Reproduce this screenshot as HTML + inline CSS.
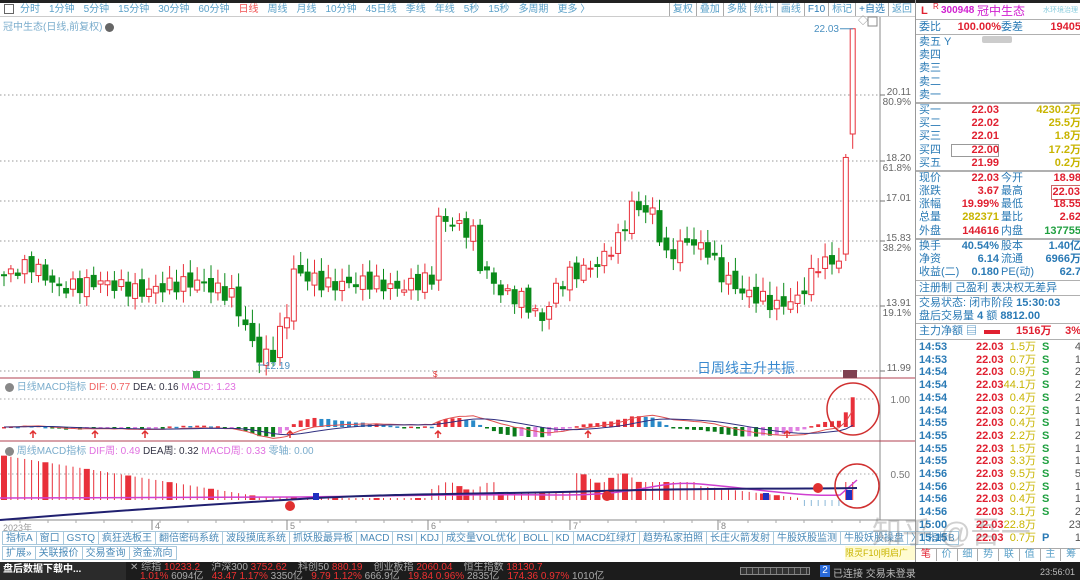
<!DOCTYPE html>
<html><head><meta charset="utf-8">
<style>
*{margin:0;padding:0;box-sizing:border-box}
body{width:1080px;height:580px;overflow:hidden;background:#fff;font-family:"Liberation Sans","Noto Sans CJK SC",sans-serif;font-size:11px;position:relative}
.a{position:absolute;white-space:nowrap}
.tb span{margin-right:9px;color:#5aa0c8}
.rp div.r{position:absolute;left:0;width:165px;height:13px;line-height:13px}
.l1{position:absolute;left:3px;color:#2a7ab5}
.v1{position:absolute;right:82px;color:#e02030;font-weight:bold}
.l2{position:absolute;left:85px;color:#2a7ab5}
.v2{position:absolute;right:0;color:#e02030;font-weight:bold}
.hl{position:absolute;left:0;width:165px;height:2px;background:#b0b0b0}
.bt{display:flex;position:absolute;left:2px;height:14px;line-height:13px;font-size:10px}
.bt span{border:1px solid #a8c8dc;border-left:none;padding:0 3px;color:#4a8ab8;background:#fff}
.bt span:first-child{border-left:1px solid #a8c8dc}
.rb span{border-left:1px solid #aaa;padding:0 3px;color:#5aa0c8}
</style></head><body>
<div class="a" style="left:0;top:0;width:1080px;height:3px;background:#222"></div>
<div class="a tb" style="left:0;top:3px;width:915px;height:14px;border-bottom:1px solid #ccc;line-height:13px;font-size:10px;padding-left:4px">
<span style="display:inline-block;width:10px;height:10px;border:1px solid #666;vertical-align:middle;margin-right:6px"></span><span>分时</span><span>1分钟</span><span>5分钟</span><span>15分钟</span><span>30分钟</span><span>60分钟</span><span style="color:#f05050">日线</span><span>周线</span><span>月线</span><span>10分钟</span><span>45日线</span><span>季线</span><span>年线</span><span>5秒</span><span>15秒</span><span>多周期</span><span>更多 〉</span></div>
<div class="a rb" style="right:165px;top:3px;display:flex;font-size:10px;line-height:13px;background:#fff">
<span>复权</span><span>叠加</span><span>多股</span><span>统计</span><span>画线</span><span style="color:#2a7ab5">F10</span><span>标记</span><span style="color:#2a7ab5">+自选</span><span>返回</span></div>
<div class="a" style="left:3px;top:18px;color:#7aaccc;font-size:10px">冠中生态(日线,前复权) <span style="display:inline-block;width:9px;height:9px;border-radius:50%;background:#666;vertical-align:middle"></span></div>

<svg class="a" style="left:0;top:0" width="915" height="530" id="sv"></svg>

<div class="a" style="left:697px;top:358px;color:#3a8ad0;font-size:14px">日周线主升共振</div>
<div class="a" style="left:5px;top:378px;font-size:10px"><span style="display:inline-block;width:9px;height:9px;border-radius:50%;background:#888;vertical-align:middle"></span> <span style="color:#7aaccc">日线MACD指标</span> <span style="color:#f06060">DIF: 0.77</span> <span style="color:#334">DEA: 0.16</span> <span style="color:#e070e0">MACD: 1.23</span></div>
<div class="a" style="left:5px;top:442px;font-size:10px"><span style="display:inline-block;width:9px;height:9px;border-radius:50%;background:#888;vertical-align:middle"></span> <span style="color:#7aaccc">周线MACD指标</span> <span style="color:#e070e0">DIF周: 0.49</span> <span style="color:#334">DEA周: 0.32</span> <span style="color:#e070e0">MACD周: 0.33</span> <span style="color:#7aaccc">零轴: 0.00</span></div>
<div class="a" style="left:3px;top:521px;font-size:9px;color:#999">2023年</div>

<div class="bt" style="top:531px"><span>指标A</span><span>窗口</span><span>GSTQ</span><span>疯狂选板王</span><span>翻倍密码系统</span><span>波段摸底系统</span><span>抓妖股最异板</span><span>MACD</span><span>RSI</span><span>KDJ</span><span>成交量VOL优化</span><span>BOLL</span><span>KD</span><span>MACD红绿灯</span><span>趋势私家拍照</span><span>长庄火箭发射</span><span>牛股妖股监测</span><span>牛股妖股操盘</span><span>〉</span><span>指标B</span></div>
<div class="bt" style="top:546px"><span>扩展»</span><span>关联报价</span><span>交易查询</span><span>资金流向</span></div>
<div class="a" style="left:845px;top:546px;width:70px;height:14px;background:#fffbd0;color:#c8b400;font-size:9px;line-height:14px">限灵F10|明启广</div>

<div class="a rp" style="left:915px;top:0;width:165px;height:562px;border-left:1px solid #999">
<div class="r" style="top:3px;height:16px;line-height:16px"><span style="position:absolute;left:5px;color:#e02030;font-weight:bold">L</span><span style="position:absolute;left:17px;top:-4px;font-size:8px;color:#e02030">R</span><span style="position:absolute;left:25px;color:#d020d0;font-weight:bold;font-size:10px">300948</span><span style="position:absolute;left:61px;color:#d020d0;font-size:12px">冠中生态</span><span style="position:absolute;left:127px;color:#8cd;font-size:7px">水环境治理</span></div>
<div class="hl" style="top:19px;height:1px"></div>
<div class="r" style="top:21px"><span class="l1">委比</span><span class="v1" style="right:80px">100.00%</span><span class="l2">委差</span><span class="v2">19405</span></div>
<div class="hl" style="top:34px;height:1px"></div>
<div class="a" style="left:66px;top:36px;width:30px;height:7px;background:#ccc;border-radius:2px"></div>
<div class="r" style="top:36px"><span class="l1">卖五 Y</span></div>
<div class="r" style="top:49px"><span class="l1">卖四</span></div>
<div class="r" style="top:62px"><span class="l1">卖三</span></div>
<div class="r" style="top:76px"><span class="l1">卖二</span></div>
<div class="r" style="top:89px"><span class="l1">卖一</span></div>
<div class="hl" style="top:102px"></div>
<div class="r" style="top:104px"><span class="l1">买一</span><span class="v1">22.03</span><span class="v2" style="color:#c8b400">4230.2万</span></div>
<div class="r" style="top:117px"><span class="l1">买二</span><span class="v1">22.02</span><span class="v2" style="color:#c8b400">25.5万</span></div>
<div class="r" style="top:130px"><span class="l1">买三</span><span class="v1">22.01</span><span class="v2" style="color:#c8b400">1.8万</span></div>
<div class="r" style="top:144px"><span class="l1">买四</span><span style="position:absolute;left:35px;width:48px;height:13px;border:1px solid #999"></span><span class="v1">22.00</span><span class="v2" style="color:#c8b400">17.2万</span></div>
<div class="r" style="top:157px"><span class="l1">买五</span><span class="v1">21.99</span><span class="v2" style="color:#c8b400">0.2万</span></div>
<div class="hl" style="top:170px"></div>
<div class="r" style="top:172px"><span class="l1">现价</span><span class="v1">22.03</span><span class="l2">今开</span><span class="v2">18.98</span></div>
<div class="r" style="top:185px"><span class="l1">涨跌</span><span class="v1">3.67</span><span class="l2">最高</span><span class="v2" style="border:1px solid #c66">22.03</span></div>
<div class="r" style="top:198px"><span class="l1">涨幅</span><span class="v1">19.99%</span><span class="l2">最低</span><span class="v2">18.55</span></div>
<div class="r" style="top:211px"><span class="l1">总量</span><span class="v1" style="color:#c8b400">282371</span><span class="l2">量比</span><span class="v2">2.62</span></div>
<div class="r" style="top:225px"><span class="l1">外盘</span><span class="v1">144616</span><span class="l2">内盘</span><span class="v2" style="color:#20a040">137755</span></div>
<div class="hl" style="top:238px"></div>
<div class="r" style="top:240px"><span class="l1">换手</span><span class="v1" style="color:#2a7ab5">40.54%</span><span class="l2">股本</span><span class="v2" style="color:#2a7ab5">1.40亿</span></div>
<div class="r" style="top:253px"><span class="l1">净资</span><span class="v1" style="color:#2a7ab5">6.14</span><span class="l2">流通</span><span class="v2" style="color:#2a7ab5">6966万</span></div>
<div class="r" style="top:266px"><span class="l1">收益(二)</span><span class="v1" style="color:#2a7ab5">0.180</span><span class="l2">PE(动)</span><span class="v2" style="color:#2a7ab5">62.7</span></div>
<div class="hl" style="top:280px;height:1px"></div>
<div class="r" style="top:282px"><span class="l1">注册制 己盈利 表决权无差异</span></div>
<div class="hl" style="top:295px;height:1px"></div>
<div class="r" style="top:297px"><span class="l1">交易状态: 闭市阶段 <b>15:30:03</b></span></div>
<div class="r" style="top:310px"><span class="l1">盘后交易量 <b>4</b> 额 <b>8812.00</b></span></div>
<div class="hl" style="top:323px;height:1px"></div>
<div class="r" style="top:325px"><span class="l1">主力净额 ▤</span><span style="position:absolute;left:68px;top:5px;width:16px;height:4px;background:#e02030"></span><span class="v1" style="right:8px;left:100px">1516万</span><span class="v2">3%</span></div>
<div class="hl" style="top:339px;height:1px"></div>
<div id="ticks"></div>
<div class="a" style="left:0;top:548px;width:165px;height:13px;display:flex;font-size:10px;line-height:12px;color:#5aa0c8;border-top:1px solid #aaa">
<span style="flex:1;text-align:center;color:#e02030;border-right:1px solid #aaa">笔</span><span style="flex:1;text-align:center;border-right:1px solid #aaa">价</span><span style="flex:1;text-align:center;border-right:1px solid #aaa">细</span><span style="flex:1;text-align:center;border-right:1px solid #aaa">势</span><span style="flex:1;text-align:center;border-right:1px solid #aaa">联</span><span style="flex:1;text-align:center;border-right:1px solid #aaa">值</span><span style="flex:1;text-align:center;border-right:1px solid #aaa">主</span><span style="flex:1;text-align:center">筹</span></div>
</div>
<div class="a" style="left:872px;top:508px;font-size:30px;color:rgba(120,120,120,.35)">知乎 @吾一</div>

<div class="a" style="left:0;top:562px;width:1080px;height:18px;background:#1c1c1c"></div>
<div class="a" style="left:0;top:562px;width:126px;height:18px;background:#2b2b2b;color:#fff;font-weight:bold;font-size:10px;line-height:16px;padding-left:3px">盘后数据下载中...</div>
<div class="a" style="left:130px;top:563px;font-size:10px;line-height:10px;color:#aaa">✕ 综指 <span style="color:#f03030">10233.2</span>&nbsp;&nbsp;&nbsp;&nbsp;沪深300 <span style="color:#f03030">3752.62</span>&nbsp;&nbsp;&nbsp;&nbsp;科创50 <span style="color:#f03030">880.19</span>&nbsp;&nbsp;&nbsp;&nbsp;创业板指 <span style="color:#f03030">2060.04</span>&nbsp;&nbsp;&nbsp;&nbsp;恒生指数 <span style="color:#f03030">18130.7</span></div>
<div class="a" style="left:140px;top:572px;font-size:10px;line-height:10px;color:#aaa"><span style="color:#f03030">1.01%</span> 6094亿&nbsp;&nbsp; <span style="color:#f03030">43.47 1.17%</span> 3350亿&nbsp;&nbsp; <span style="color:#f03030">9.79 1.12%</span> 666.9亿&nbsp;&nbsp; <span style="color:#f03030">19.84 0.96%</span> 2835亿&nbsp;&nbsp; <span style="color:#f03030">174.36 0.97%</span> 1010亿</div>
<div class="a" style="left:740px;top:567px;width:70px;height:8px;border:1px solid #888;background:repeating-linear-gradient(90deg,#333 0 5px,#777 5px 6px)"></div>
<div class="a" style="left:820px;top:565px;width:10px;height:12px;background:#2a6ad8;color:#fff;font-size:10px;text-align:center;line-height:12px">2</div>
<div class="a" style="left:833px;top:565px;color:#bbb;font-size:10px">已连接 交易未登录</div>
<div class="a" style="left:1040px;top:567px;color:#bbb;font-size:9px">23:56:01</div>

<script>
const sv=document.getElementById('sv');let s='';
function py(p){return 95+(20.11-p)*34.5;}
[95,161,201,241,306,371].forEach(y=>{s+=`<line x1="0" x2="880" y1="${y}" y2="${y}" stroke="#999" stroke-dasharray="1.5,2.5"/>`;});
s+=`<line x1="880" x2="880" y1="17" y2="520" stroke="#888"/>`;
s+=`<line x1="0" x2="915" y1="378" y2="378" stroke="#b04050"/><line x1="0" x2="915" y1="441" y2="441" stroke="#b04050"/><line x1="0" x2="915" y1="520" y2="520" stroke="#888"/>`;
[[399,'1.00'],[474,'0.50']].forEach(a=>{s+=`<line x1="0" x2="880" y1="${a[0]}" y2="${a[0]}" stroke="#aaa" stroke-dasharray="1.5,2.5"/><text x="910" y="${a[0]+4}" font-size="10" fill="#777" text-anchor="end">${a[1]}</text>`;});
[[95,'20.11','80.9%'],[161,'18.20','61.8%'],[201,'17.01',''],[241,'15.83','38.2%'],[306,'13.91','19.1%'],[371,'11.99','']].forEach(a=>{s+=`<line x1="880" x2="885" y1="${a[0]}" y2="${a[0]}" stroke="#777"/><text x="911" y="${a[0]}" font-size="10" fill="#666" text-anchor="end">${a[1]}</text><text x="911" y="${a[0]+10}" font-size="10" fill="#666" text-anchor="end">${a[2]}</text>`;});
[[152,'4'],[287,'5'],[428,'6'],[570,'7'],[718,'8']].forEach(a=>{s+=`<line x1="${a[0]}" x2="${a[0]}" y1="520" y2="530" stroke="#888"/><text x="${a[0]+3}" y="529" font-size="9" fill="#888">${a[1]}</text>`;});
for(let x=20;x<880;x+=28){s+=`<line x1="${x}" x2="${x}" y1="520" y2="523" stroke="#aaa"/>`;}
const kp=[[0,14.9],[4,15.2],[8,14.5],[14,14.7],[20,14.4],[24,14.6],[28,14.7],[33,14.3],[35,13.4],[37,12.5],[39,12.6],[41,13.8],[42,15.0],[47,14.6],[53,14.7],[57,14.5],[62,14.8],[63,16.5],[65,16.4],[68,16.1],[69,15.2],[72,14.4],[75,14.2],[78,13.6],[80,14.5],[82,14.9],[86,15.2],[89,15.9],[91,16.9],[94,16.7],[96,15.4],[99,15.9],[102,15.6],[104,14.9],[107,14.4],[110,14.2],[112,14.0],[115,14.2],[118,15.2],[120,15.3],[121,15.3]];
const N=124;const C=[];
function interp(i){for(let k=0;k<kp.length-1;k++){if(i>=kp[k][0]&&i<=kp[k+1][0]){const t=(i-kp[k][0])/(kp[k+1][0]-kp[k][0]);return kp[k][1]+t*(kp[k+1][1]-kp[k][1]);}}return 15.3;}
let prev=14.8;
for(let i=0;i<N;i++){let o,c,h,l;
 if(i==N-2){o=15.5;c=18.3;h=18.4;l=15.3;}
 else if(i==N-1){o=18.98;c=22.03;h=22.03;l=18.55;}
 else{c=interp(i)+Math.sin(i*2.7)*0.22;o=prev+Math.sin(i*1.9+1)*0.12;h=Math.max(o,c)+0.1+Math.abs(Math.sin(i*3.1))*0.3;l=Math.min(o,c)-0.08-Math.abs(Math.cos(i*2.3))*0.25;}
 C.push(c);prev=c;
 const x=4+i*6.9;const up=c>=o;const col=up?'#e8303a':'#0a8a1a';
 const yt=py(Math.max(o,c)),yb=py(Math.min(o,c));
 s+=`<line x1="${x}" x2="${x}" y1="${py(h)}" y2="${py(l)}" stroke="${col}"/>`;
 s+=`<rect x="${x-2.5}" y="${yt}" width="5" height="${Math.max(1,yb-yt)}" fill="${up?'#fff':col}" stroke="${col}" stroke-width="1"/>`;
}
s+=`<text x="839" y="${py(22.03)+3}" font-size="10" fill="#4a90c0" text-anchor="end">22.03</text><line x1="840" x2="853" y1="${py(22.03)}" y2="${py(22.03)}" stroke="#4a90c0"/>`;
s+=`<text x="265" y="369" font-size="10" fill="#4a90c0">12.19</text><line x1="258" x2="265" y1="365" y2="365" stroke="#4a90c0"/>`;
s+=`<rect x="193" y="371" width="7" height="7" fill="#2a9a3a"/><text x="433" y="377" font-size="8" fill="#e03030">$</text><rect x="843" y="370" width="14" height="8" fill="#804050"/>`;
s+=`<text x="858" y="24" font-size="10" fill="#888">◇</text><rect x="868" y="17" width="9" height="9" fill="none" stroke="#888"/>`;
function ema(a,n){const r=[];let e=a[0];a.forEach((v,i)=>{e=i?e+(v-e)*2/(n+1):v;r.push(e)});return r;}
const e12=ema(C,12),e26=ema(C,26);const dif=C.map((v,i)=>e12[i]-e26[i]);const dea=ema(dif,9);
const z=427,sc=22;let pd='',pe='';
for(let i=0;i<N;i++){const x=4+i*6.9;const m=2*(dif[i]-dea[i]);const pm=i?2*(dif[i-1]-dea[i-1]):m;
 let col=m>=0?(m>=pm?'#e8303a':'#2a8ac8'):(m<=pm?'#0a7a1a':'#e080e0');
 const y=z-m*sc;s+=`<rect x="${x-2}" y="${Math.min(y,z)}" width="4" height="${Math.max(1.5,Math.abs(y-z))}" fill="${col}"/>`;
 pd+=(i?'L':'M')+x+','+(z-dif[i]*sc);pe+=(i?'L':'M')+x+','+(z-dea[i]*sc);}
s+=`<path d="${pd}" fill="none" stroke="#e05050"/><path d="${pe}" fill="none" stroke="#303080"/>`;
[33,95,145,290,438,588,787].forEach(x=>{s+=`<path d="M${x},438 v-7 m-3,3 l3,-3 l3,3" stroke="#e03030" stroke-width="1.5" fill="none"/>`});
s+=`<circle cx="853" cy="409" r="26" fill="none" stroke="#d03030" stroke-width="1.5"/>`;
const wz=500;
for(let i=0;i<N;i++){const x=4+i*6.9;let h=0;
 if(x<260)h=45-x*0.16;else if(x<300)h=3;else if(x<430)h=2;else if(x<500)h=14+Math.sin(i)*4;else if(x<570)h=8;else if(x<640)h=22+Math.sin(i)*5;else if(x<700)h=18;else if(x<800)h=14-(x-700)*0.12;else if(x<845)h=-6;else h=18;
 const thick=(i%6==0&&x<700)||(x>=455&&x<470)||(x>=580&&x<640&&i%2==0)||(x>=760&&x<790&&i%2==0);
 s+=`<rect x="${x-(thick?3:0.5)}" y="${h>0?wz-h:wz}" width="${thick?6:1}" height="${Math.abs(h)}" fill="${h>0?'#e8303a':'#8ab8d8'}"/>`;}
s+=`<path d="M0,498 C100,497 200,498 300,497 S450,494 550,495 S650,480 700,484 S800,497 840,495 L857,480" fill="none" stroke="#d040d0" stroke-width="1.5"/>`;
s+=`<path d="M0,520 C100,512 200,505 300,499 S500,494 600,491 S800,489 857,488" fill="none" stroke="#202070" stroke-width="2"/>`;
s+=`<rect x="846" y="490" width="6" height="10" fill="#2030c0"/><circle cx="290" cy="506" r="5" fill="#e03030"/><circle cx="607" cy="496" r="5" fill="#e03030"/><circle cx="818" cy="488" r="5" fill="#e03030"/><rect x="313" y="493" width="6" height="7" fill="#2030c0"/><rect x="763" y="493" width="6" height="7" fill="#2030c0"/>`;
s+=`<circle cx="857" cy="486" r="22" fill="none" stroke="#d03030" stroke-width="1.5"/>`;
sv.innerHTML=s;
const tk=[['14:53','1.5万','S','4'],['14:53','0.7万','S','1'],['14:54','0.9万','S','2'],['14:54','44.1万','S','2'],['14:54','0.4万','S','2'],['14:54','0.2万','S','1'],['14:55','0.4万','S','1'],['14:55','2.2万','S','2'],['14:55','1.5万','S','1'],['14:55','3.3万','S','1'],['14:56','9.5万','S','5'],['14:56','0.2万','S','1'],['14:56','0.4万','S','1'],['14:56','3.1万','S','2'],['15:00','22.8万','','23'],['15:15','0.7万','P','1']];
let h='';tk.forEach((t,i)=>{const y=341+i*12.7;h+=`<div class="r" style="top:${y}px;font-weight:bold"><span style="position:absolute;left:3px;color:#2a7ab5">${t[0]}</span><span style="position:absolute;left:60px;color:#e02030">22.03</span><span style="position:absolute;right:45px;color:#c8b400;font-weight:normal">${t[1]}</span><span style="position:absolute;left:126px;color:${t[2]=='S'?'#20a040':'#2a7ab5'}">${t[2]}</span><span style="position:absolute;right:0;color:#555;font-weight:normal">${t[3]}</span></div>`;});
document.getElementById('ticks').innerHTML=h;
</script>
</body></html>
